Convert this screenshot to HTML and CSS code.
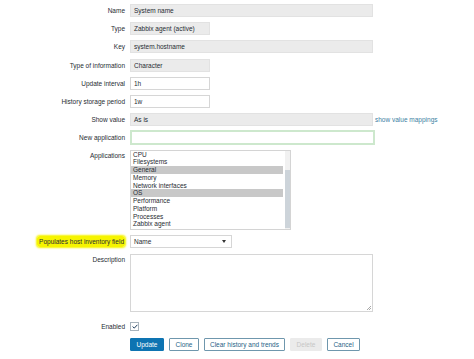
FILE: index.html
```html
<!DOCTYPE html>
<html>
<head>
<meta charset="utf-8">
<link rel="stylesheet" href="styles.css">
</head>
<body>
<form class="form">
  <div class="row"><label class="lbl">Name</label><div class="field ro wide">System name</div></div>
  <div class="row"><label class="lbl">Type</label><div class="field ro short">Zabbix agent (active)</div></div>
  <div class="row"><label class="lbl">Key</label><div class="field ro wide">system.hostname</div></div>
  <div class="row r19"><label class="lbl">Type of information</label><div class="field ro short">Character</div></div>
  <div class="row"><label class="lbl">Update interval</label><div class="field short">1h</div></div>
  <div class="row"><label class="lbl">History storage period</label><div class="field short">1w</div></div>
  <div class="row"><label class="lbl">Show value</label><div class="field ro wide">As is</div><a class="link">show value mappings</a></div>
  <div class="row r17"><label class="lbl lbl-mid">New application</label><div class="field focus"></div></div>
  <div class="row r20"><label class="lbl lbl-top">Applications</label>
    <div class="listbox">
      <ul class="items">
        <li>CPU</li>
        <li>Filesystems</li>
        <li class="sel">General</li>
        <li>Memory</li>
        <li>Network interfaces</li>
        <li class="sel">OS</li>
        <li>Performance</li>
        <li>Platform</li>
        <li>Processes</li>
        <li>Zabbix agent</li>
      </ul>
      <div class="sbar"><div class="thumb"></div></div>
    </div>
  </div>
  <div class="row r20"><label class="lbl"><span class="hl">Populates host inventory field</span></label><div class="field select">Name<svg class="caret" width="4" height="3" viewBox="0 0 4 3"><path d="M0 0 L4 0 L2 3 Z" fill="#333"/></svg></div></div>
  <div class="row r19"><label class="lbl lbl-top">Description</label><div class="textarea"><span class="grip"></span></div></div>
  <div class="row r24"><label class="lbl">Enabled</label><div class="chk-wrap"><span class="chk"><svg width="6" height="5" viewBox="0 0 6 5"><path d="M0.6 2.6 L2.3 4.1 L5.4 0.8" fill="none" stroke="#1b3a5a" stroke-width="1"/></svg></span></div></div>
  <div class="row r21"><span class="lbl"></span>
    <div class="buttons">
      <button type="button" class="btn primary b-update">Update</button>
      <button type="button" class="btn b-clone">Clone</button>
      <button type="button" class="btn b-clear">Clear history and trends</button>
      <button type="button" class="btn disabled b-delete">Delete</button>
      <button type="button" class="btn b-cancel">Cancel</button>
    </div>
  </div>
</form>
</body>
</html>
```
FILE: styles.css
```css
html, body {
  margin: 0;
  padding: 0;
  background: #ffffff;
}
body {
  font-family: "Liberation Sans", Arial, sans-serif;
  font-size: 6.5px;
  color: #1f2c33;
  width: 474px;
  height: 359px;
  overflow: hidden;
}
.form {
  display: flex;
  flex-direction: column;
  padding-top: 4px;
}
.row {
  display: flex;
  align-items: flex-start;
  margin-top: 5px;
}
.row:first-child { margin-top: 0; }
.row.r19 { margin-top: 6px; }
.row.r17 { margin-top: 4px; }
.row.r20 { margin-top: 5px; }
.row.r24 { margin-top: 8px; }
.row.r21 { margin-top: 5px; }
.lbl {
  width: 125px;
  flex: 0 0 125px;
  text-align: right;
  line-height: 13px;
  padding-right: 5px;
  box-sizing: content-box;
  white-space: nowrap;
}
.lbl-mid { line-height: 15px; }
.lbl-top { line-height: 12px; }
.field {
  box-sizing: border-box;
  height: 13px;
  line-height: 11px;
  padding: 0 3px;
  border: 1px solid #d6d6d6;
  background: #ffffff;
  white-space: nowrap;
  overflow: hidden;
}
.field.ro {
  background: #ebebeb;
  border-color: #e2e2e2;
}
.field.wide { width: 243px; }
.field.short { width: 80px; }
.field.focus {
  width: 245px;
  height: 15px;
  border: 2px solid #cde8cd;
}
.link {
  color: #3d7fa3;
  margin-left: 2px;
  line-height: 13px;
}
.listbox {
  display: flex;
  width: 161px;
  height: 80px;
  box-sizing: border-box;
  border: 1px solid #d4d4d4;
  background: #fff;
}
.items {
  list-style: none;
  margin: 0;
  padding: 0 2px 0 0;
  flex: 1;
}
.items li {
  height: 7.78px;
  line-height: 7.78px;
  padding-left: 2px;
  white-space: nowrap;
}
.items li:first-child { margin-top: -0.5px; }
.items li.sel { background: #c8c8c8; }
.sbar {
  width: 5px;
  background: #f1f1f1;
  display: flex;
  flex-direction: column;
}
.thumb {
  margin-top: 19px;
  height: 58px;
  background: #cdd4da;
}
.hl {
  background: #f6f400;
  padding: 2px 1px 2px 2px;
  border-radius: 3px;
  box-shadow: 0 0 2px 1px #f6f400;
}
.field.select {
  width: 102px;
  display: flex;
  justify-content: space-between;
  align-items: center;
  line-height: 11px;
}
.caret {
  margin-right: 2px;
}
.textarea {
  width: 243px;
  height: 58px;
  box-sizing: border-box;
  border: 1px solid #d6d6d6;
  background: #fff;
  display: flex;
  justify-content: flex-end;
  align-items: flex-end;
}
.grip {
  width: 4px;
  height: 4px;
  margin: 0 1px 1px 0;
  background: linear-gradient(135deg, transparent 45%, #aaa 45%, #aaa 55%, transparent 55%, transparent 75%, #aaa 75%, #aaa 85%, transparent 85%);
}
.chk-wrap {
  height: 13px;
  display: flex;
  align-items: center;
}
.chk {
  box-sizing: border-box;
  width: 9px;
  height: 9px;
  border: 1px solid #a9b4bd;
  background: #fff;
  display: flex;
  align-items: center;
  justify-content: center;
}
.buttons {
  display: flex;
  gap: 5px;
}
.btn {
  box-sizing: border-box;
  height: 13px;
  padding: 0;
  font-family: "Liberation Sans", Arial, sans-serif;
  font-size: 6.5px;
  line-height: 11px;
  background: #fff;
  color: #1f5f86;
  border: 1px solid #6f97ad;
  border-radius: 1px;
  text-align: center;
  white-space: nowrap;
}
.btn.primary {
  background: #0e74b2;
  color: #ffffff;
  border-color: #0e74b2;
}
.btn.disabled {
  background: #ebebeb;
  color: #c6c6c6;
  border-color: #ebebeb;
}
.b-update { width: 34px; }
.b-clone { width: 30px; }
.b-clear { width: 81px; }
.b-delete { width: 32px; }
.b-cancel { width: 33px; }
```
